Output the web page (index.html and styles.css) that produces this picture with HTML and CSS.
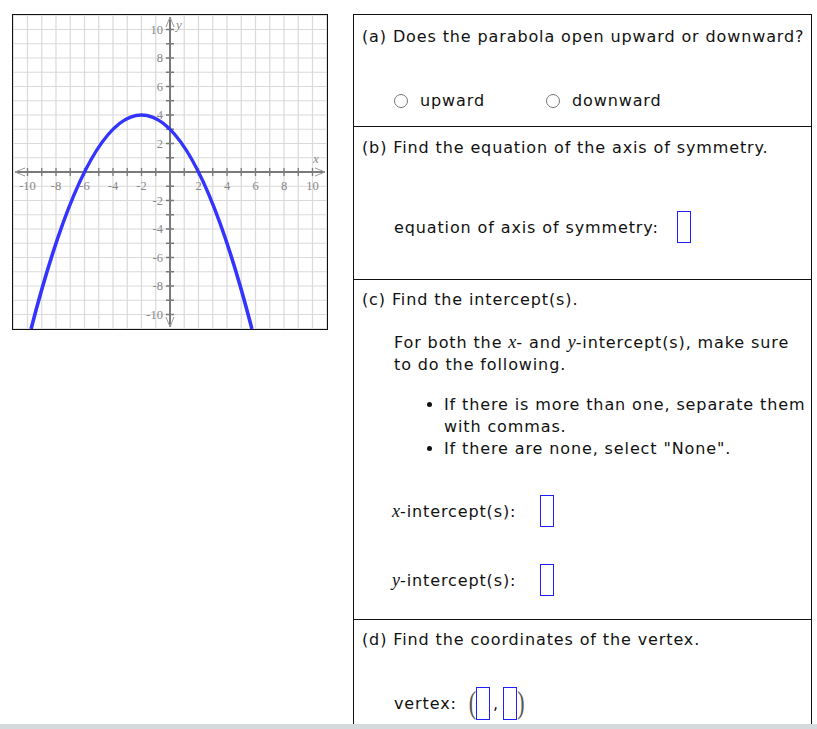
FILE: index.html
```html
<!DOCTYPE html>
<html>
<head>
<meta charset="utf-8">
<link rel="stylesheet" href="styles.css">
</head>
<body>
<div class="page">
  <div class="graph">
    <svg width="314" height="314" viewBox="0 0 314 314">
      <path class="grid" d="M0.25 0V314M14.5 0V314M28.75 0V314M43 0V314M57.25 0V314M71.5 0V314M85.75 0V314M100 0V314M114.25 0V314M128.5 0V314M142.75 0V314M171.25 0V314M185.5 0V314M199.75 0V314M214 0V314M228.25 0V314M242.5 0V314M256.75 0V314M271 0V314M285.25 0V314M299.5 0V314M313.75 0V314M0 0.25H314M0 14.5H314M0 28.75H314M0 43H314M0 57.25H314M0 71.5H314M0 85.75H314M0 100H314M0 114.25H314M0 128.5H314M0 142.75H314M0 171.25H314M0 185.5H314M0 199.75H314M0 214H314M0 228.25H314M0 242.5H314M0 256.75H314M0 271H314M0 285.25H314M0 299.5H314M0 313.75H314"/>
      <path class="axis" d="M2 157H312M157 2V312"/>
      <path class="ticks" d="M14.5 153V161M28.75 153V161M43 153V161M57.25 153V161M71.5 153V161M85.75 153V161M100 153V161M114.25 153V161M128.5 153V161M142.75 153V161M171.25 153V161M185.5 153V161M199.75 153V161M214 153V161M228.25 153V161M242.5 153V161M256.75 153V161M271 153V161M285.25 153V161M299.5 153V161M153 14.5H161M153 28.75H161M153 43H161M153 57.25H161M153 71.5H161M153 85.75H161M153 100H161M153 114.25H161M153 128.5H161M153 142.75H161M153 171.25H161M153 185.5H161M153 199.75H161M153 214H161M153 228.25H161M153 242.5H161M153 256.75H161M153 271H161M153 285.25H161M153 299.5H161"/>
      <path class="arrow" d="M12 153L2 157L12 161M302 153L312 157L302 161M153 12L157 2L161 12M153 302L157 312L161 302"/>
      <g class="xlab">
        <text x="14.5" y="175">-10</text>
        <text x="43" y="175">-8</text>
        <text x="71.5" y="175">-6</text>
        <text x="100" y="175">-4</text>
        <text x="128.5" y="175">-2</text>
        <text x="185.5" y="175">2</text>
        <text x="214" y="175">4</text>
        <text x="242.5" y="175">6</text>
        <text x="271" y="175">8</text>
        <text x="299.5" y="175">10</text>
      </g>
      <g class="ylab">
        <text x="150" y="18.5">10</text>
        <text x="150" y="47">8</text>
        <text x="150" y="75.5">6</text>
        <text x="150" y="104">4</text>
        <text x="150" y="132.5">2</text>
        <text x="150" y="189.5">-2</text>
        <text x="150" y="218">-4</text>
        <text x="150" y="246.5">-6</text>
        <text x="150" y="275">-8</text>
        <text x="150" y="303.5">-10</text>
      </g>
      <text class="vname" x="300" y="148">x</text>
      <text class="vname" x="163" y="14">y</text>
      <path class="curve" d="M18.06 313.97Q128.5 -113.97 238.94 313.97"/>
    </svg>
  </div>

  <div class="panel">
    <section class="part part-a">
      <p class="title">(a) Does the parabola open upward or downward?</p>
      <div class="radios">
        <label class="radio"><span class="dot"></span>upward</label>
        <label class="radio"><span class="dot"></span>downward</label>
      </div>
    </section>

    <section class="part part-b">
      <p class="title">(b) Find the equation of the axis of symmetry.</p>
      <div class="answer-row">
        <span class="label">equation of axis of symmetry:</span>
        <span class="box"></span>
      </div>
    </section>

    <section class="part part-c">
      <p class="title">(c) Find the intercept(s).</p>
      <p class="para">For both the <i class="m">x</i>- and <i class="m">y</i>-intercept(s), make sure<br>to do the following.</p>
      <ul class="bullets">
        <li>If there is more than one, separate them<br>with commas.</li>
        <li>If there are none, select "None".</li>
      </ul>
      <div class="answer-row row-x">
        <span class="label"><i class="m">x</i>-intercept(s):</span>
        <span class="box"></span>
      </div>
      <div class="answer-row row-y">
        <span class="label"><i class="m">y</i>-intercept(s):</span>
        <span class="box"></span>
      </div>
    </section>

    <section class="part part-d">
      <p class="title">(d) Find the coordinates of the vertex.</p>
      <div class="answer-row row-v">
        <span class="label">vertex:</span>
        <span class="paren paren-open">(</span><span class="box"></span><span class="comma">,</span><span class="box"></span><span class="paren">)</span>
      </div>
    </section>
  </div>
</div>
<div class="footer-bar"></div>
</body>
</html>
```

FILE: styles.css
```css
html, body {
  margin: 0;
  padding: 0;
  background: #fff;
}
body {
  font-family: "DejaVu Sans", Verdana, sans-serif;
  font-size: 16px;
  letter-spacing: 0.88px;
  color: #111;
  overflow: hidden;
}
.page {
  display: flex;
  align-items: flex-start;
  padding: 14px 0 0 12px;
  gap: 25px;
}
.graph {
  width: 314px;
  height: 314px;
  border: 1px solid #111;
  flex: none;
  letter-spacing: 0;
}
.graph svg { display: block; }
.grid { stroke: #dadada; stroke-width: 1.2; fill: none; }
.axis { stroke: #7a7a7a; stroke-width: 2; fill: none; }
.ticks { stroke: #7a7a7a; stroke-width: 1.3; fill: none; }
.arrow { stroke: #9a9a9a; stroke-width: 1; fill: none; }
.curve { stroke: #3434ff; stroke-width: 3.6; fill: none; }
.xlab text, .ylab text {
  font-family: "Liberation Serif", serif;
  font-size: 12.5px;
  fill: #888;
}
.xlab text { text-anchor: middle; }
.ylab text { text-anchor: end; }
.vname {
  font-family: "Liberation Serif", serif;
  font-style: italic;
  font-size: 13px;
  fill: #888;
}

.panel {
  width: 457px;
  border: 1px solid #111;
  flex: none;
}
.part {
  padding: 0 8px;
}
.part + .part { border-top: 1px solid #111; }
.title {
  margin: 0;
  line-height: 22px;
  white-space: nowrap;
}
.part-a { padding-top: 11px; padding-bottom: 14px; }
.radios {
  display: flex;
  margin: 42px 0 0 32px;
  line-height: 22px;
}
.radio {
  display: flex;
  align-items: center;
  gap: 12px;
  width: 152px;
}
.dot {
  width: 12px;
  height: 12px;
  border: 1px solid #767676;
  border-radius: 50%;
  background: #fff;
}
.part-b { padding-top: 10px; padding-bottom: 36px; }
.answer-row {
  display: flex;
  align-items: center;
  margin-left: 32px;
  height: 32px;
}
.part-b .answer-row { margin-top: 52px; }
.label { white-space: nowrap; }
.box {
  width: 12px;
  height: 30px;
  border: 1px solid #1f1fff;
  flex: none;
}
.part-b .box { margin-left: 18px; }
.part-c { padding-top: 9px; padding-bottom: 23px; }
.para {
  margin: 20px 0 0 32px;
  line-height: 22px;
  white-space: nowrap;
}
.m {
  font-family: "Liberation Serif", serif;
  font-style: italic;
  font-size: 18px;
  letter-spacing: 0;
}
.bullets {
  margin: 18px 0 0 0;
  padding: 0 0 0 82px;
  line-height: 22px;
  white-space: nowrap;
}
.row-x { margin-top: 35px; margin-left: 30px; }
.row-y { margin-top: 37px; margin-left: 30px; }
.row-x .box, .row-y .box { margin-left: 24px; }
.part-d { padding-top: 9px; padding-bottom: 40px; }
.row-v { margin-top: 35px; height: 34px; }
.paren {
  display: inline-block;
  font-family: "Liberation Serif", serif;
  font-size: 22px;
  color: #555;
  transform: scaleY(1.45);
  line-height: 34px;
  letter-spacing: 0;
}
.paren-open { margin-left: 12px; }
.comma { margin: 0 5px 0 3px; letter-spacing: 0; }
.row-v .box { height: 31px; }
.footer-bar {
  position: fixed;
  left: 0;
  right: 0;
  bottom: 0;
  height: 5px;
  background: #d5dbdc;
}
```
